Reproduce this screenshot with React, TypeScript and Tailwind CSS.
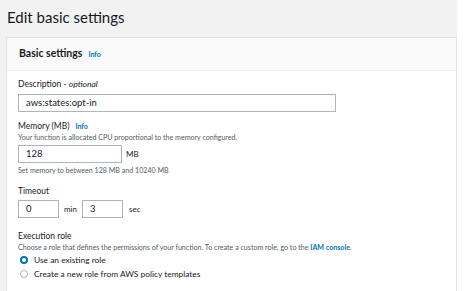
import React from "react";

const font = { fontFamily: 'Lato, "Open Sans", Arial, sans-serif' };

function Info() {
	return <span className="ml-[6px] text-[7px] font-bold text-[#0073bb]">Info</span>;
}

function Radio({ checked, label }: { checked?: boolean; label: string }) {
	return (
		<label className="flex items-center h-[14px]">
			<span
				className={
					checked
						? "w-[8px] h-[8px] rounded-full border-[2.5px] border-[#0073bb] bg-white"
						: "w-[8px] h-[8px] rounded-full border border-[#aab7b8] bg-white"
				}
			/>
			<span className="ml-[6px] text-[8.4px] text-[#16191f]">{label}</span>
		</label>
	);
}

export default function App() {
	return (
		<div className="w-[474px] h-[291px] overflow-hidden bg-white text-[#16191f]" style={font}>
			<div className="w-[457px] h-full bg-[#f2f2f2] pl-[6px]">
				<h1 className="h-[37px] pl-[1px] pt-[4px] text-[15px] leading-[26px] text-[#16191f]">
					Edit basic settings
				</h1>
				<div className="h-[260px] bg-white border-l border-r border-t border-[#e3e3e3]">
					<div className="h-[33px] bg-[#fafafa] border-b border-[#eaeded] flex items-center pl-[12px]">
						<span className="text-[10.5px] font-bold">Basic settings</span>
						<Info />
					</div>
					<div className="pl-[11px] pt-[7px]">
						<div className="text-[8.5px] leading-[12px]">
							Description - <i>optional</i>
						</div>
						<div className="mt-[4px] w-[318px] h-[18px] border border-[#aab7b8] flex items-center pl-[7px] text-[9.5px]">
							aws:states:opt-in
						</div>

						<div className="mt-[8px] text-[8.5px] leading-[12px] flex items-center">
							Memory (MB)
							<Info />
						</div>
						<div className="mt-[1px] text-[7.1px] leading-[10px] text-[#545b64]">
							Your function is allocated CPU proportional to the memory configured.
						</div>
						<div className="mt-[2px] flex items-center">
							<div className="w-[104px] h-[18px] border border-[#aab7b8] flex items-center pl-[7px] text-[9.5px]">
								128
							</div>
							<span className="ml-[4px] text-[8px]">MB</span>
						</div>
						<div className="mt-[3px] text-[7.1px] leading-[10px] text-[#545b64]">
							Set memory to between 128 MB and 10240 MB
						</div>

						<div className="mt-[9px] text-[8.5px] leading-[12px]">Timeout</div>
						<div className="mt-[3px] flex items-center text-[9.5px]">
							<div className="w-[41px] h-[18px] border border-[#aab7b8] flex items-center pl-[7px]">
								0
							</div>
							<span className="ml-[5px] mr-[5px] text-[8px]">min</span>
							<div className="w-[41px] h-[18px] border border-[#aab7b8] flex items-center pl-[7px]">
								3
							</div>
							<span className="ml-[6px] text-[8px]">sec</span>
						</div>

						<div className="mt-[12px] text-[8.5px] leading-[12px]">Execution role</div>
						<div className="mt-[1px] text-[7.1px] leading-[10px] text-[#545b64]">
							Choose a role that defines the permissions of your function. To create a custom role, go to the{" "}
							<span className="font-bold text-[#0073bb]">IAM console</span>.
						</div>
						<div className="pl-[2px]">
							<Radio checked label="Use an existing role" />
							<Radio label="Create a new role from AWS policy templates" />
						</div>
						<div className="mt-[8px] text-[8.5px] leading-[12px]">Existing role</div>
					</div>
				</div>
			</div>
		</div>
	);
}
